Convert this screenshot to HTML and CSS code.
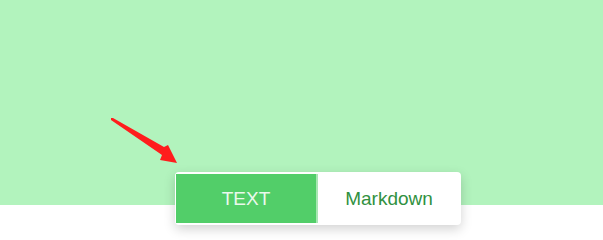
FILE: index.html
```html
<!DOCTYPE html>
<html>
<head>
<meta charset="utf-8">
<link rel="stylesheet" href="styles.css">
</head>
<body>
<div class="page">
  <div class="band"></div>
  <div class="switch">
    <div class="opt active">TEXT</div>
    <div class="divider"></div>
    <div class="opt">Markdown</div>
  </div>
  <svg class="arrow" width="80" height="60" viewBox="0 0 80 60">
    <polygon points="0,0 2,0 53,29 57,27 66,45 49,42 51,37 0,2" fill="#ff1d1d"/>
  </svg>
</div>
</body>
</html>
```
FILE: styles.css
```css
html, body { margin: 0; padding: 0; background: #fff; }
.page { position: relative; width: 603px; height: 240px; overflow: hidden; font-family: "Liberation Sans", Arial, sans-serif; }
.band { height: 205px; background: #b2f3bd; }
.switch {
  display: flex;
  width: 286px;
  height: 53px;
  box-sizing: border-box;
  padding: 2px 1px 2px 1px;
  margin: -33px 0 0 175px;
  background: #fff;
  border-radius: 4px;
  box-shadow: 0 4px 12px rgba(0,0,0,0.18);
}
.opt {
  display: flex;
  align-items: center;
  justify-content: center;
  font-size: 19px;
  color: #31913f;
  flex: 1;
}
.opt.active {
  flex: 0 0 140px;
  background: #52ce69;
  color: #eaf9ec;
}
.divider { width: 2px; background: #a8e7b3; }
.arrow { position: absolute; left: 111px; top: 118px; }
```
